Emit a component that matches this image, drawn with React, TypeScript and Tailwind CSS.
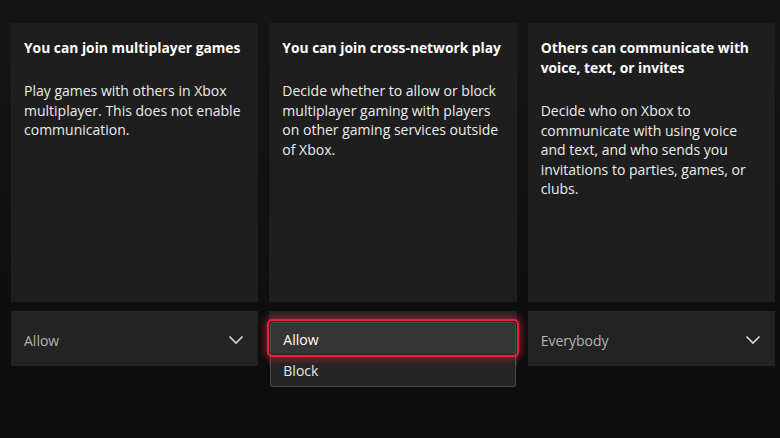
import React from "react";

const Chevron = () => (
  <svg width="16" height="10" viewBox="0 0 16 10" fill="none" className="shrink-0">
    <path d="M1.5 1.5 L8 8 L14.5 1.5" stroke="#d8d8d8" strokeWidth="1.6" />
  </svg>
);

type Col = { title: string[]; body: string; value: string; open?: boolean };

const cols: Col[] = [
  {
    title: ["You can join multiplayer games"],
    body: "Play games with others in Xbox multiplayer. This does not enable communication.",
    value: "Allow",
  },
  {
    title: ["You can join cross-network play"],
    body: "Decide whether to allow or block multiplayer gaming with players on other gaming services outside of Xbox.",
    value: "Allow",
    open: true,
  },
  {
    title: ["Others can communicate with", "voice, text, or invites"],
    body: "Decide who on Xbox to communicate with using voice and text, and who sends you invitations to parties, games, or clubs.",
    value: "Everybody",
  },
];

export default function App() {
  return (
    <div
      className="w-[780px] h-[438px] overflow-hidden bg-gradient-to-b from-[#151515] to-[#0c0c0c] pl-[11px] pr-[5px] pt-[23px]"
      style={{ fontFamily: '"Open Sans", "Noto Sans", sans-serif' }}
    >
      <div className="grid grid-cols-3 gap-x-[11px]">
        {cols.map((c, i) => (
          <div key={i} className="flex flex-col">
            <div className="h-[279px] bg-[#1e1e1e] pl-[13px] pr-[14px] pt-[15px]">
              <div className="text-[13.8px] font-bold leading-[20px] text-white">
                {c.title.map((t, j) => (
                  <div key={j}>{t}</div>
                ))}
              </div>
              <p className="mt-[23px] text-[14px] leading-[19.5px] text-[#ececec]">
                {c.body}
              </p>
            </div>
            <div className="relative mt-[9px]">
              <div className="h-[55px] bg-[#232323] flex items-center justify-between pl-[13px] pr-[14px] pt-[3px]">
                {!c.open && (
                  <>
                    <span className="text-[14px] text-[#b4b4b4]">{c.value}</span>
                    <Chevron />
                  </>
                )}
              </div>
              {c.open && (
                <div className="absolute left-[1px] right-[1px] top-[11px] border border-[#4a4a4a] bg-[#252525] rounded-[2px]">
                  <div className="relative h-[31px] flex items-center pl-[12px] pt-[2px] bg-[#353535]">
                    <div className="absolute -left-[4px] -right-[4px] -top-[4px] -bottom-[3px] rounded-[5px] border-2 border-[#e8213d] shadow-[0_0_7px_2px_rgba(232,33,61,0.55)]" />
                    <span className="text-[14px] text-white">Allow</span>
                  </div>
                  <div className="h-[32px] flex items-center pl-[12px]">
                    <span className="text-[14px] text-[#e8e8e8]">Block</span>
                  </div>
                </div>
              )}
            </div>
          </div>
        ))}
      </div>
    </div>
  );
}
